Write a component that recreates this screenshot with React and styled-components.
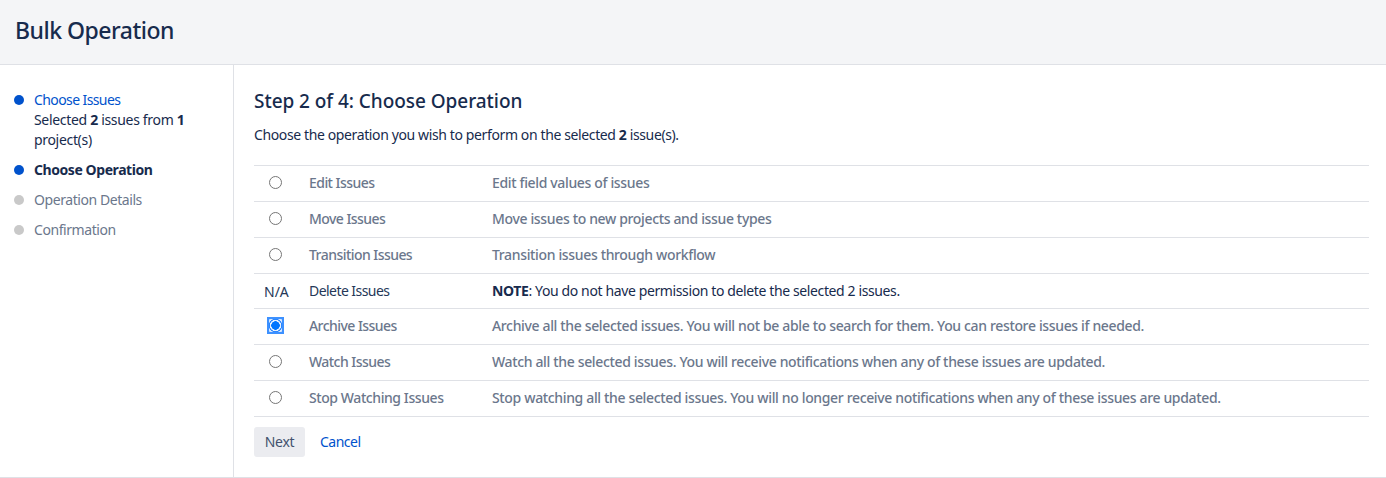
import React from "react";
import styled, { createGlobalStyle } from "styled-components";

const Global = createGlobalStyle`
  html, body { margin: 0; padding: 0; background: #fff; }
  body { font-family: "Noto Sans", "Open Sans", "Liberation Sans", sans-serif; font-size: 14px; line-height: 20px; color: #172b4d; }
`;
const Page = styled.div`
  width: 1386px; height: 478px; box-sizing: border-box; display: flex; flex-direction: column;
  border-bottom: 1px solid #dfe1e6;
`;
const Header = styled.header`
  height: 65px; box-sizing: border-box; flex: none; background: #f4f5f7; border-bottom: 1px solid #dfe1e6;
  padding: 14px 15px 0;
`;
const Title = styled.h1`
  margin: 0; font-size: 23px; line-height: 32px; font-weight: 500; color: #172b4d; letter-spacing: -0.5px;
`;
const Body = styled.div`
  flex: 1; display: flex; min-height: 0;
`;
const Side = styled.nav`
  width: 234px; flex: none; box-sizing: border-box; border-right: 1px solid #dfe1e6; padding: 25px 20px 0 14px;
`;
const Steps = styled.ul`
  list-style: none; margin: 0; padding: 0; display: flex; flex-direction: column; gap: 10px;
`;
const Step = styled.li`
  display: grid; grid-template-columns: 10px 1fr; column-gap: 10px;
  color: ${p => p.$muted ? "#6b778c" : "#172b4d"};
  font-weight: ${p => p.$current ? 700 : 400};
  letter-spacing: ${p => p.$current || p.$muted ? "-0.43px" : "-0.32px"};
  &::before {
    content: ""; width: 10px; height: 10px; border-radius: 50%; margin-top: 5px;
    background: ${p => p.$muted ? "#c9c9c9" : "#0052cc"};
  }
`;
const StepLink = styled.a`
  display: block; color: #0052cc; text-decoration: none; letter-spacing: -0.6px;
`;
const Main = styled.main`
  flex: 1; min-width: 0; padding: 24px 17px 0 20px;
`;
const H2 = styled.h2`
  margin: 0; font-size: 19px; line-height: 24px; font-weight: 500; color: #172b4d; letter-spacing: -0.05px;
`;
const Intro = styled.p`
  margin: 12px 0 0; letter-spacing: -0.38px;
`;
const Table = styled.div`
  margin-top: 20px; border-top: 1px solid #dfe1e6;
`;
const Row = styled.div`
  display: grid; grid-template-columns: 46px 183px 1fr; align-items: center;
  height: ${p => p.$short ? "35px" : "36px"}; box-sizing: border-box; border-bottom: 1px solid #dfe1e6;
  color: ${p => p.$disabled ? "#253858" : "#6b778c"};
  font-weight: ${p => p.$disabled ? 400 : 500};
  letter-spacing: -0.35px;
  padding-left: 9px;
  padding-bottom: ${p => p.$short ? 0 : 1}px;
`;
const OpName = styled.span`
  letter-spacing: ${p => p.$tight ? "-0.55px" : "-0.42px"};
`;
const RadioCell = styled.div`
  display: flex; justify-content: center; width: 26px; margin-left: -1px; margin-top: -1px;
`;
const NA = styled.span`
  letter-spacing: 0; margin-left: 1px; margin-top: 1px;
`;
const Sel = styled.span`
  display: flex; align-items: center; justify-content: center; width: 17px; height: 17px;
  background: ${p => p.$on ? "#3d91ff" : "transparent"};
`;
const Radio = styled.input.attrs({ type: "radio", name: "op" })`
  appearance: none; margin: 0; width: 13px; height: 13px; box-sizing: border-box;
  border: 1px solid #767676; border-radius: 50%; background: #fff;
  &:checked {
    border: 0; border-radius: 1px;
    background: radial-gradient(circle, #0075ff 0 4px, #e8f2ff 4.5px 5.4px, #2a86ff 5.9px 6.4px, #d4e6ff 7px);
  }
`;
const Note = styled.span`
  font-weight: 400; color: #172b4d; letter-spacing: -0.38px;
  b { font-weight: 700; }
`;
const Actions = styled.div`
  display: flex; align-items: center; gap: 15px; margin-top: 10px;
`;
const Button = styled.button`
  height: 30px; width: 51px; border: 0; border-radius: 3px; background: #ebecf0; color: #42526e; font: inherit; letter-spacing: -0.3px; padding: 0;
`;
const Cancel = styled.a`
  color: #0052cc; text-decoration: none; letter-spacing: -0.5px;
`;

const ops = [
  ["Edit Issues", "Edit field values of issues"],
  ["Move Issues", "Move issues to new projects and issue types"],
  ["Transition Issues", "Transition issues through workflow"],
  ["Delete Issues", null],
  ["Archive Issues", "Archive all the selected issues. You will not be able to search for them. You can restore issues if needed.", true],
  ["Watch Issues", "Watch all the selected issues. You will receive notifications when any of these issues are updated."],
  ["Stop Watching Issues", "Stop watching all the selected issues. You will no longer receive notifications when any of these issues are updated."],
];

export default function App() {
  return (
    <Page>
      <Global />
      <Header><Title>Bulk Operation</Title></Header>
      <Body>
        <Side>
          <Steps>
            <Step>
              <div>
                <StepLink href="#">Choose Issues</StepLink>
                Selected <b>2</b> issues from <b>1</b> project(s)
              </div>
            </Step>
            <Step $current><span>Choose Operation</span></Step>
            <Step $muted><span>Operation Details</span></Step>
            <Step $muted><span>Confirmation</span></Step>
          </Steps>
        </Side>
        <Main>
          <H2>Step 2 of 4: Choose Operation</H2>
          <Intro>Choose the operation you wish to perform on the selected <b>2</b> issue(s).</Intro>
          <Table>
            {ops.map(([name, desc, on]) => desc ? (
              <Row key={name}>
                <RadioCell><Sel $on={on}><Radio defaultChecked={!!on} /></Sel></RadioCell>
                <OpName $tight={name.length < 18}>{name}</OpName>
                <span>{desc}</span>
              </Row>
            ) : (
              <Row key={name} $disabled $short>
                <NA>N/A</NA>
                <OpName $tight>{name}</OpName>
                <Note><b>NOTE</b>: You do not have permission to delete the selected 2 issues.</Note>
              </Row>
            ))}
          </Table>
          <Actions>
            <Button>Next</Button>
            <Cancel href="#">Cancel</Cancel>
          </Actions>
        </Main>
      </Body>
    </Page>
  );
}
